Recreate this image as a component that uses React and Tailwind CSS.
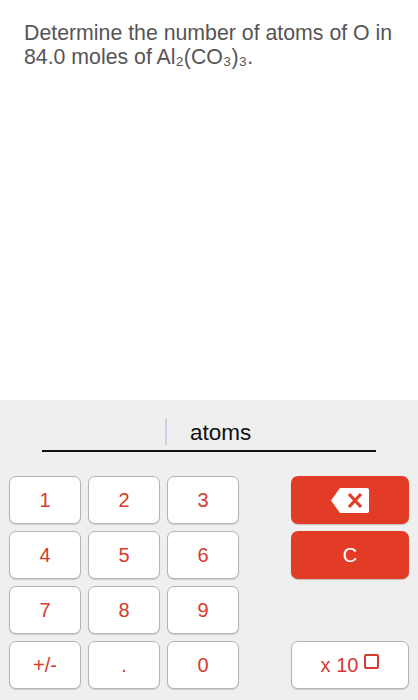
import React from "react";

const font = { fontFamily: '"Liberation Sans", Arial, sans-serif' };

function Key({ children }) {
  return (
    <div className="h-[48px] flex items-center justify-center rounded-[7px] bg-white border border-[#b4b4b4] shadow-[0_1px_1px_rgba(0,0,0,0.15)] text-[#d63a2c] text-[20px]">
      {children}
    </div>
  );
}

export default function App() {
  return (
    <div className="w-[418px] h-[700px] flex flex-col bg-white" style={font}>
      <div className="h-[400px] px-[24px] pt-[21px]">
        <p className="text-[21.3px] leading-[24px] text-[#555555]">
          Determine the number of atoms of O in 84.0 moles of Al₂(CO₃)₃.
        </p>
      </div>
      <div className="flex-1 bg-[#efefef] flex flex-col">
        <div className="mx-[42px] mt-[18px] h-[34px] border-b-2 border-[#111] relative flex items-end">
          <div className="absolute left-[123px] top-0 w-[2px] h-[27px] bg-[#c5d3e3]" />
          <span className="ml-[148px] mb-[5px] text-[22.5px] leading-[24px] text-[#111]">atoms</span>
        </div>
        <div className="flex mt-[24px] px-[9px]">
          <div className="grid grid-cols-[72px_72px_72px] gap-x-[7px] gap-y-[7px]">
            <Key>1</Key>
            <Key>2</Key>
            <Key>3</Key>
            <Key>4</Key>
            <Key>5</Key>
            <Key>6</Key>
            <Key>7</Key>
            <Key>8</Key>
            <Key>9</Key>
            <Key>+/-</Key>
            <Key>.</Key>
            <Key>0</Key>
          </div>
          <div className="ml-[52px] flex-1 flex flex-col gap-[7px]">
            <div className="h-[48px] rounded-[7px] bg-[#e23b26] shadow-[0_1px_1px_rgba(0,0,0,0.2)] flex items-center justify-center">
              <svg width="40" height="27" viewBox="0 0 40 27">
                <path d="M10 1 H37 A2 2 0 0 1 39 3 V24 A2 2 0 0 1 37 26 H10 L1 13.5 Z" fill="#ffffff" />
                <path d="M19 7 L31 20 M31 7 L19 20" stroke="#e23b26" strokeWidth="3.2" strokeLinecap="butt" />
              </svg>
            </div>
            <div className="h-[48px] rounded-[7px] bg-[#e23b26] shadow-[0_1px_1px_rgba(0,0,0,0.2)] flex items-center justify-center text-white text-[20px]">
              C
            </div>
            <div className="h-[48px]" />
            <div className="h-[48px] flex items-center justify-center rounded-[7px] bg-white border border-[#b4b4b4] shadow-[0_1px_1px_rgba(0,0,0,0.15)] text-[#d63a2c] text-[20px]">
              <span>x 10</span>
              <span className="ml-[6px] mb-[8px] w-[15px] h-[15px] border-2 border-[#d63a2c] rounded-[2px]" />
            </div>
          </div>
        </div>
      </div>
    </div>
  );
}
